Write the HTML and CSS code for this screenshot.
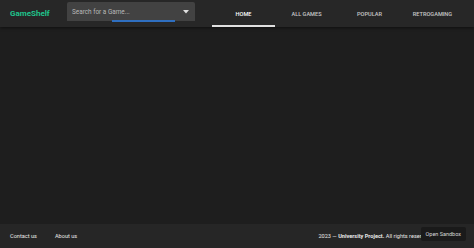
FILE: index.html
```html
<!DOCTYPE html>
<html lang="en">
<head>
  <meta charset="UTF-8">
  <meta name="viewport" content="width=device-width, initial-scale=1.0">
  <title>GameShelf</title>
  <link rel="stylesheet" href="styles.css">
</head>
<body>
  <div class="app">
    <header class="topbar">
      <div class="brand">GameShelf</div>
      <div class="search">
        <span class="search-text">Search for a Game...</span>
        <svg class="caret" width="6" height="4" viewBox="0 0 6 4"><path d="M0 0 L6 0 L3 3.5 Z" fill="#e0e0e0"/></svg>
        <span class="search-line"></span>
      </div>
      <nav class="tabs">
        <a class="tab active">HOME</a>
        <a class="tab">ALL GAMES</a>
        <a class="tab">POPULAR</a>
        <a class="tab">RETROGAMING</a>
      </nav>
    </header>
    <main class="content"></main>
    <footer class="footer">
      <div class="links">
        <a>Contact us</a>
        <a>About us</a>
      </div>
      <div class="copy">2023 &mdash; <strong>University Project.</strong> All rights reserved.</div>
    </footer>
  </div>
  <div class="sandbox">Open Sandbox</div>
</body>
</html>
```

FILE: styles.css
```css
html, body {
  margin: 0;
  height: 100%;
}

body {
  font-family: Roboto, 'Liberation Sans', sans-serif;
  background-color: #1e1e1e;
  color: #e8e8e8;
  overflow: hidden;
}

.app {
  display: flex;
  flex-direction: column;
  height: 100%;
}

.topbar {
  display: flex;
  align-items: center;
  height: 27px;
  background-color: #272727;
  box-shadow: 0 1px 3px rgba(0, 0, 0, 0.5);
  padding-left: 10px;
  position: relative;
  z-index: 1;
}

.brand {
  color: #1fc48c;
  font-weight: bold;
  font-size: 8px;
  width: 57px;
}

.search {
  position: relative;
  display: flex;
  align-items: center;
  justify-content: space-between;
  width: 128px;
  height: 19px;
  margin-top: -4px;
  background-color: #424242;
  border-radius: 2px 2px 0 0;
  padding: 0 6px 0 5px;
  box-sizing: border-box;
}

.search-text {
  font-size: 6.4px;
  color: #b8b8b8;
}

.search-line {
  position: absolute;
  left: 45px;
  width: 63px;
  bottom: -1px;
  height: 2px;
  background-color: #2f6fc0;
}

.tabs {
  display: flex;
  align-self: stretch;
  margin-left: 17px;
}

.tab {
  width: 63px;
  display: flex;
  align-items: center;
  justify-content: center;
  font-size: 5.6px;
  font-weight: 500;
  color: #c8c8c8;
  box-sizing: border-box;
}

.tab.active {
  color: #ffffff;
  border-bottom: 2px solid #e0e0e0;
  padding-top: 2px;
}

.content {
  flex: 1;
}

.footer {
  display: flex;
  align-items: center;
  justify-content: space-between;
  height: 24px;
  background-color: #262626;
  font-size: 5.6px;
  padding: 0 0 0 10px;
  white-space: nowrap;
  overflow: hidden;
}

.links {
  display: flex;
  gap: 18px;
}

.copy {
  padding-right: 42px;
  color: #e8e8e8;
}

.sandbox {
  position: fixed;
  right: 8px;
  bottom: 7px;
  background-color: #1a1a1a;
  color: #d8d8d8;
  font-size: 5.5px;
  padding: 4px 5px;
  border-radius: 2px;
}
```
